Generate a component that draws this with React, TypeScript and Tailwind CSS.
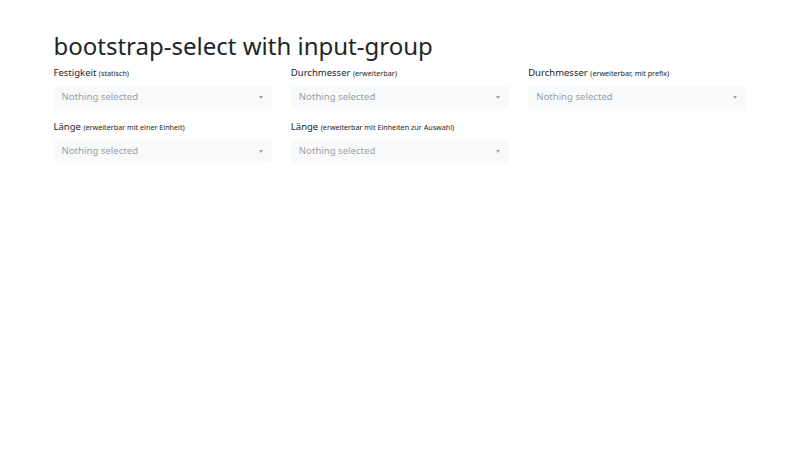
const FIELDS = [
  { label: "Festigkeit", hint: "(statisch)" },
  { label: "Durchmesser", hint: "(erweiterbar)" },
  { label: "Durchmesser", hint: "(erweiterbar, mit prefix)" },
  { label: "Länge", hint: "(erweiterbar mit einer Einheit)" },
  { label: "Länge", hint: "(erweiterbar mit Einheiten zur Auswahl)" },
];

export default function App() {
  return (
    <div className="min-h-[450px] bg-white text-[#212529] font-['Noto_Sans','Open_Sans',sans-serif]">
      <div className="mx-auto w-[693px] pt-[28px]">
        <h1 className="text-[24px] leading-[36px] font-normal">bootstrap-select with input-group</h1>
        <div className="mt-[1px] grid grid-cols-3 gap-x-[19px] gap-y-[10px]">
          {FIELDS.map((f, i) => (
            <Select key={i} label={f.label} hint={f.hint} />
          ))}
        </div>
      </div>
    </div>
  );
}

function Select({ label, hint }: { label: string; hint: string }) {
  return (
    <div>
      <div className="text-[9.5px] leading-[16px] h-[16px]">
        {label} <span className="text-[7.2px]">{hint}</span>
      </div>
      <div className="mt-[5px] flex h-[23px] items-center justify-between rounded-[3px] bg-[#f8f9fa] pl-[8px] pr-[9px]">
        <span className="text-[9.6px] text-[#9aa0a6]">Nothing selected</span>
        <span className="h-0 w-0 border-x-[2.5px] border-t-[3px] border-x-transparent border-t-[#9aa0a6]" />
      </div>
    </div>
  );
}
